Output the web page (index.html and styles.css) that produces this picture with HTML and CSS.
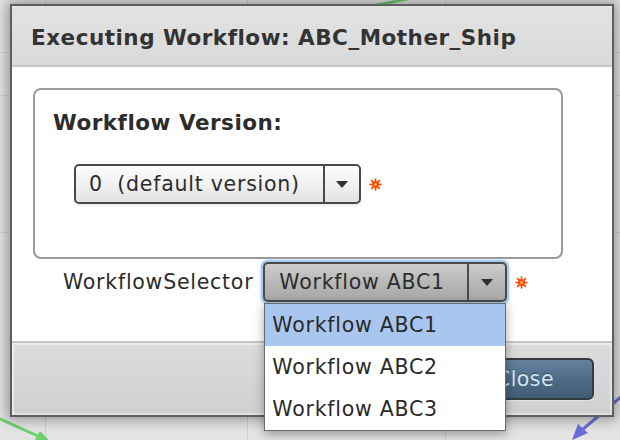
FILE: index.html
```html
<!DOCTYPE html>
<html>
<head>
<meta charset="utf-8">
<link rel="stylesheet" href="styles.css">
</head>
<body>
<div class="stage">
  <svg class="backdrop" width="620" height="440" viewBox="0 0 620 440">
    <g stroke="#cfcfcf" stroke-width="1">
      <line x1="45.5" y1="0" x2="45.5" y2="440"/>
      <line x1="247.5" y1="0" x2="247.5" y2="440"/>
      <line x1="445.5" y1="0" x2="445.5" y2="440"/>
      <line x1="0" y1="52.5" x2="620" y2="52.5"/>
      <line x1="0" y1="95.5" x2="620" y2="95.5"/>
      <line x1="0" y1="232.5" x2="620" y2="232.5"/>
    </g>
    <path d="M372 6 Q392 2 412 -2" stroke="#72cc72" stroke-width="3" fill="none"/>
    <line x1="-2" y1="418" x2="40" y2="437" stroke="#6fd06f" stroke-width="3"/>
    <polygon points="50,441 34,441 40,431" fill="#6fd06f"/>
    <line x1="622" y1="396" x2="582" y2="430" stroke="#6c6cd8" stroke-width="3"/>
    <polygon points="572,440 578,424 588,433" fill="#6c6cd8"/>
  </svg>

  <div class="dialog">
    <div class="dialog-header">
      <h1 class="dialog-title">Executing Workflow: ABC_Mother_Ship</h1>
    </div>
    <div class="dialog-body">
      <div class="group">
        <div class="group-label">Workflow Version:</div>
        <div class="field-row indent">
          <div class="select">
            <span class="select-value">0&nbsp; (default version)</span>
            <span class="select-arrow"><span class="tri"></span></span>
          </div>
          <svg class="required" width="13" height="13" viewBox="0 0 12 12">
            <g stroke="#ff4d00" stroke-width="1.5">
              <line x1="6" y1="0.3" x2="6" y2="11.7"/>
              <line x1="0.3" y1="6" x2="11.7" y2="6"/>
              <line x1="2" y1="2" x2="10" y2="10"/>
              <line x1="10" y1="2" x2="2" y2="10"/>
            </g>
            <circle cx="6" cy="6" r="3.2" fill="#ff4d00"/>
            <circle cx="6" cy="6" r="1.2" fill="#ffc9a8"/>
          </svg>
        </div>
      </div>
      <div class="field-row selector-row">
        <span class="field-label">WorkflowSelector</span>
        <div class="select-wrap">
          <div class="select active">
            <span class="select-value">Workflow ABC1</span>
            <span class="select-arrow"><span class="tri"></span></span>
          </div>
          <ul class="menu">
            <li class="menu-item selected">Workflow ABC1</li>
            <li class="menu-item">Workflow ABC2</li>
            <li class="menu-item">Workflow ABC3</li>
          </ul>
        </div>
        <svg class="required" width="13" height="13" viewBox="0 0 12 12">
          <g stroke="#ff4d00" stroke-width="1.5">
            <line x1="6" y1="0.3" x2="6" y2="11.7"/>
            <line x1="0.3" y1="6" x2="11.7" y2="6"/>
            <line x1="2" y1="2" x2="10" y2="10"/>
            <line x1="10" y1="2" x2="2" y2="10"/>
          </g>
          <circle cx="6" cy="6" r="3.2" fill="#ff4d00"/>
          <circle cx="6" cy="6" r="1.2" fill="#ffc9a8"/>
        </svg>
      </div>
    </div>
    <div class="dialog-footer">
      <button class="btn-close">Close</button>
    </div>
  </div>
</div>
</body>
</html>
```

FILE: styles.css
```css
html, body {
  margin: 0;
  padding: 0;
}
body {
  width: 620px;
  height: 440px;
  overflow: hidden;
  background: #e4e4e4;
  font-family: "DejaVu Sans", Verdana, sans-serif;
  color: #2c2c2c;
}
.stage {
  position: relative;
  width: 620px;
  height: 440px;
}
.backdrop {
  position: absolute;
  left: 0;
  top: 0;
}
.dialog {
  position: absolute;
  left: 10px;
  top: 4px;
  width: 600px;
  height: 409px;
  border: 2px solid #5e5e5e;
  background: #fff;
  display: flex;
  flex-direction: column;
  box-shadow: 0 0 12px 3px rgba(0, 0, 0, 0.35);
}
.dialog-header {
  flex: none;
  height: 61px;
  box-sizing: border-box;
  border-bottom: 2px solid #c6c6c6;
  background: linear-gradient(#e3e3e3, #d9d9d9);
  display: flex;
  align-items: center;
  padding: 3px 19px 0;
}
.dialog-title {
  margin: 0;
  font-size: 21.5px;
  font-weight: bold;
  letter-spacing: 0.5px;
  color: #333;
}
.dialog-body {
  flex: 1;
  padding: 21px 0 0 21px;
}
.group {
  width: 508px;
  height: 167px;
  border: 2px solid #9a9a9a;
  border-radius: 8px;
  padding: 0 0 0 18px;
}
.group-label {
  margin-top: 20px;
  font-size: 21.5px;
  font-weight: bold;
  letter-spacing: 0.5px;
  color: #2c2c2c;
  line-height: 25px;
}
.field-row {
  display: flex;
  align-items: center;
}
.indent {
  margin: 29px 0 0 21px;
}
.select {
  display: flex;
  width: 283px;
  height: 36px;
  border: 2px solid #4a4a4a;
  border-radius: 5px;
  background: linear-gradient(#fdfdfd, #f1f1f1 50%, #e2e2e2);
  box-shadow: 0 2px 2px rgba(0, 0, 0, 0.08);
}
.select-value {
  flex: 1;
  font-size: 20.5px;
  letter-spacing: 0.75px;
  line-height: 36px;
  padding-left: 13px;
  white-space: nowrap;
  overflow: hidden;
}
.select-arrow {
  width: 34px;
  border-left: 2px solid #4a4a4a;
  display: flex;
  align-items: center;
  justify-content: center;
}
.tri {
  width: 0;
  height: 0;
  border-left: 6px solid transparent;
  border-right: 6px solid transparent;
  border-top: 7px solid #303030;
  margin-top: 1px;
}
.required {
  margin-left: 8px;
  flex: none;
}
.selector-row {
  margin: 3px 0 0 30px;
}
.field-label {
  font-size: 20.5px;
  letter-spacing: 0.75px;
  margin-right: 10px;
  white-space: nowrap;
}
.select-wrap {
  position: relative;
}
.select.active {
  width: 240px;
  background: linear-gradient(#cdcdcd, #b8b8b8 50%, #a7a7a7);
  box-shadow: 0 0 0 2px #a6c9f0, 0 0 3px 2px rgba(120, 170, 230, 0.6);
}
.select.active .select-value {
  padding-left: 14px;
}
.select.active .select-arrow {
  width: 36px;
}
.menu {
  position: absolute;
  left: 1px;
  top: 41px;
  width: 240px;
  margin: 0;
  padding: 0;
  list-style: none;
  background: #fff;
  border: 1px solid #6c6c6c;
  box-shadow: 0 3px 10px rgba(0, 0, 0, 0.35);
  z-index: 5;
}
.menu-item {
  height: 42px;
  line-height: 42px;
  padding-left: 7px;
  font-size: 20.5px;
  letter-spacing: 0.75px;
  color: #2a2a2a;
  white-space: nowrap;
}
.menu-item.selected {
  background: #a9c6ee;
}
.dialog-footer {
  flex: none;
  height: 74px;
  box-sizing: border-box;
  border-top: 2px solid #c6c6c6;
  background: linear-gradient(#dcdcdc, #d0d0d0);
  box-shadow: inset 2px 2px 0 #eaeaea, inset -2px -2px 0 #e2e2e2;
  display: flex;
  justify-content: flex-end;
  align-items: flex-start;
  padding: 15px 18px 0 0;
}
.btn-close {
  width: 138px;
  height: 42px;
  border: 2px solid #333a42;
  border-radius: 6px;
  background: linear-gradient(#64829f, #4e6985 55%, #435c76);
  color: #d3e6f3;
  font-family: "DejaVu Sans", Verdana, sans-serif;
  font-size: 20.5px;
  letter-spacing: 0.5px;
  padding: 0;
  text-shadow: 0 -1px 0 rgba(0, 0, 0, 0.3);
  box-shadow: 0 1px 1px rgba(255, 255, 255, 0.4);
}
```
